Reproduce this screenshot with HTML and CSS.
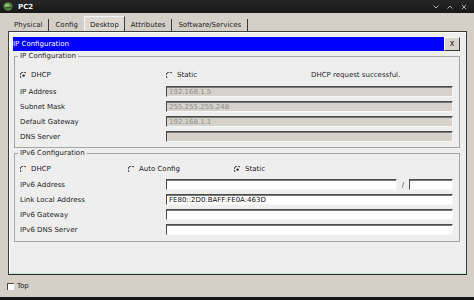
FILE: index.html
```html
<!DOCTYPE html>
<html>
<head>
<meta charset="utf-8">
<link rel="stylesheet" href="styles.css">
</head>
<body>
<div class="window">
  <div class="titlebar">
    <svg class="appicon" width="10" height="9" viewBox="0 0 10 9">
      <ellipse cx="5" cy="4.5" rx="4.6" ry="4.2" fill="#4f7d3e"/>
      <ellipse cx="4.2" cy="3.6" rx="2.6" ry="2" fill="#8fbf6a"/>
      <path d="M2 6.2 Q5 4.5 8.4 5.6" stroke="#2a4a22" stroke-width="1" fill="none"/>
    </svg>
    <span class="title">PC2</span>
    <div class="controls">
      <svg width="6" height="4" viewBox="0 0 6 4"><path d="M0.5 0.5 L3 3 L5.5 0.5" stroke="#b0b0b0" stroke-width="1" fill="none"/></svg>
      <svg width="6" height="4" viewBox="0 0 6 4"><path d="M0.5 3.5 L3 1 L5.5 3.5" stroke="#b0b0b0" stroke-width="1" fill="none"/></svg>
      <svg width="6" height="6" viewBox="0 0 6 6"><path d="M0.8 0.8 L5.2 5.2 M5.2 0.8 L0.8 5.2" stroke="#b0b0b0" stroke-width="1" fill="none"/></svg>
    </div>
  </div>

  <div class="tabs">
    <span class="tab">Physical</span><span class="sep"></span>
    <span class="tab">Config</span>
    <span class="tab active">Desktop</span>
    <span class="tab">Attributes</span><span class="sep"></span>
    <span class="tab">Software/Services</span><span class="sep"></span>
  </div>

  <div class="panel">
    <div class="head">
      <div class="headbar">IP Configuration</div>
      <div class="close">x</div>
    </div>

    <fieldset class="group g4">
      <legend>IP Configuration</legend>
      <div class="radios r4">
        <span class="radio"><svg class="rb" width="7" height="7" viewBox="0 0 7 7"><path d="M1 6 A3 3 0 0 1 6 1" stroke="#333" stroke-width="1" fill="none"/><circle cx="3.6" cy="3.6" r="1.2" fill="#222"/></svg>DHCP</span>
        <span class="radio"><svg class="rb" width="7" height="7" viewBox="0 0 7 7"><path d="M1 6 A3 3 0 0 1 6 1" stroke="#333" stroke-width="1" fill="none"/></svg>Static</span>
        <span class="msg">DHCP request successful.</span>
      </div>
      <div class="rows">
        <span class="lbl">IP Address</span><input class="field off" value="192.168.1.5" readonly>
        <span class="lbl">Subnet Mask</span><input class="field off" value="255.255.255.248" readonly>
        <span class="lbl">Default Gateway</span><input class="field off" value="192.168.1.1" readonly>
        <span class="lbl">DNS Server</span><input class="field off" value="" readonly>
      </div>
    </fieldset>

    <fieldset class="group g6">
      <legend>IPv6 Configuration</legend>
      <div class="radios r6">
        <span class="radio"><svg class="rb" width="7" height="7" viewBox="0 0 7 7"><path d="M1 6 A3 3 0 0 1 6 1" stroke="#333" stroke-width="1" fill="none"/></svg>DHCP</span>
        <span class="radio"><svg class="rb" width="7" height="7" viewBox="0 0 7 7"><path d="M1 6 A3 3 0 0 1 6 1" stroke="#333" stroke-width="1" fill="none"/></svg>Auto Config</span>
        <span class="radio"><svg class="rb" width="7" height="7" viewBox="0 0 7 7"><path d="M1 6 A3 3 0 0 1 6 1" stroke="#333" stroke-width="1" fill="none"/><circle cx="3.6" cy="3.6" r="1.2" fill="#222"/></svg>Static</span>
      </div>
      <div class="rows">
        <span class="lbl">IPv6 Address</span>
        <div class="addr"><input class="field" value="" readonly><span class="slash">/</span><input class="field prefix" value="" readonly></div>
        <span class="lbl">Link Local Address</span><input class="field" value="FE80::2D0:BAFF:FE0A:463D" readonly>
        <span class="lbl">IPv6 Gateway</span><input class="field" value="" readonly>
        <span class="lbl">IPv6 DNS Server</span><input class="field" value="" readonly>
      </div>
    </fieldset>
  </div>

  <div class="footer">
    <span class="check"></span><span>Top</span>
  </div>
  <div class="bottombar"></div>
</div>
</body>
</html>
```

FILE: styles.css
```css
html, body {
  margin: 0;
  padding: 0;
}
body {
  width: 474px;
  height: 300px;
  overflow: hidden;
  background: #d4d0c8;
  font-family: "DejaVu Sans", sans-serif;
  font-size: 7px;
  color: #222;
}
.window {
  display: flex;
  flex-direction: column;
  height: 300px;
}
.titlebar {
  height: 13px;
  background: linear-gradient(#262626, #181818);
  display: flex;
  align-items: center;
  padding-left: 3px;
  box-sizing: border-box;
}
.appicon {
  display: block;
  margin-right: 5px;
}
.title {
  color: #f2f2f2;
  font-weight: bold;
  font-size: 7px;
  padding-top: 1px;
}
.controls {
  margin-left: auto;
  padding-right: 7px;
  display: flex;
  align-items: center;
  gap: 8px;
}
.controls svg {
  display: block;
}
.tabs {
  height: 18px;
  display: flex;
  align-items: flex-end;
  padding-left: 8px;
}
.tab {
  height: 13px;
  line-height: 14px;
  padding: 0 6px;
  color: #222;
  white-space: nowrap;
}
.tab.active {
  height: 15px;
  line-height: 16px;
  padding: 0 5px;
  background: #dedad3;
  border-top: 1px solid #f6f6f6;
  border-left: 1px solid #f6f6f6;
  border-right: 1px solid #404040;
  box-sizing: border-box;
}
.sep {
  width: 1px;
  height: 12px;
  background: #3a3a3a;
}
.panel {
  margin-left: 8px;
  width: 459px;
  height: 244px;
  box-sizing: border-box;
  border: 1px solid #3c3c3c;
  border-bottom-color: #2c2c2c;
  box-shadow: inset 1px 1px 0 #ffffff, inset 0 -1px 0 #bfe3da;
  background: #eeeeee;
  padding: 5px 5px 0 4px;
  display: flex;
  flex-direction: column;
}
.head {
  display: flex;
  height: 14px;
  margin-right: 1px;
}
.headbar {
  flex: 1;
  background: #0000fe;
  color: #ffffff;
  line-height: 14px;
  font-size: 7px;
}
.close {
  width: 16px;
  height: 14px;
  box-sizing: border-box;
  background: #d8d4cd;
  border: 1px solid;
  border-color: #f8f8f8 #3a3a3a #3a3a3a #f8f8f8;
  text-align: center;
  line-height: 11px;
  font-size: 8px;
  color: #222;
}
.group {
  margin: 1px 1px 0 1px;
  border: 1px solid #a6a6a6;
  min-width: 0;
  padding: 6px 6px 3px 5px;
}
.g6 {
  margin-top: 1px;
  padding-top: 3px;
  padding-bottom: 4px;
}
legend {
  line-height: 9px;
  font-size: 7px;
  padding: 0 2px;
  margin-left: -2px;
  color: #222;
}
.radios {
  display: grid;
  height: 16px;
  align-items: center;
}
.r4 {
  height: 17px;
  grid-template-columns: 146px 145px 1fr;
  align-items: start;
  padding-top: 4px;
  box-sizing: border-box;
}
.r6 {
  grid-template-columns: 108px 106px 1fr;
}
.radio {
  display: flex;
  align-items: center;
  gap: 4px;
  white-space: nowrap;
}
.rb {
  display: block;
}
.msg {
  color: #2a2a2a;
  white-space: nowrap;
}
.rows {
  display: grid;
  grid-template-columns: 146px 1fr;
  grid-auto-rows: 15px;
  align-items: center;
}
.lbl {
  white-space: nowrap;
  color: #222;
}
.field {
  display: block;
  width: 100%;
  height: 11px;
  box-sizing: border-box;
  margin: 0;
  border: 1px solid;
  border-color: #4a4a4a #f6f6f6 #f6f6f6 #4a4a4a;
  box-shadow: inset 0 1px 0 #7a7a7a;
  background: #ffffff;
  font-family: "DejaVu Sans", sans-serif;
  font-size: 7px;
  padding: 0 2px;
  color: #111;
  outline: none;
}
.field.off {
  background: #d6d2cb;
  color: #8e8e8e;
}
.addr {
  display: flex;
  align-items: center;
}
.addr .field {
  flex: 1;
  min-width: 0;
}
.addr .prefix {
  flex: 0 0 44px;
  width: 44px;
}
.slash {
  width: 12px;
  text-align: center;
  color: #333;
}
.footer {
  height: 22px;
  display: flex;
  align-items: center;
  padding-left: 7px;
  gap: 3px;
}
.check {
  width: 7px;
  height: 7px;
  box-sizing: border-box;
  background: #ffffff;
  border-top: 1px solid #4a4a4a;
  border-left: 1px solid #4a4a4a;
}
.bottombar {
  height: 3px;
  background: #141414;
}
```
